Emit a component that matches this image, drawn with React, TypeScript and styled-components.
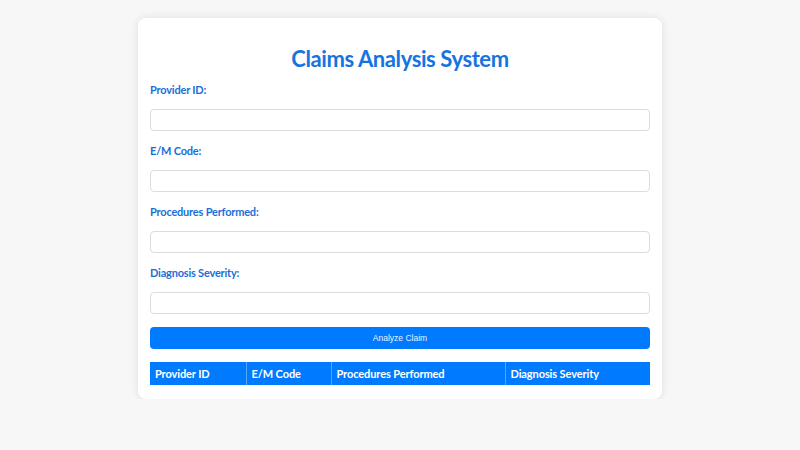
import React, {useState} from 'react';
import styled, {createGlobalStyle} from 'styled-components';

const GlobalStyle = createGlobalStyle`
  html, body {
    margin: 0;
    padding: 0;
    background: #f7f7f7;
  }
  body {
    font-family: Lato, "Open Sans", sans-serif;
  }
`;

const Page = styled.div`
  display: flex;
  justify-content: center;
  align-items: flex-start;
  padding-top: 18px;
`;

const Card = styled.div`
  width: 524px;
  box-sizing: border-box;
  padding: 27px 12px 14px;
  background: #fff;
  border-radius: 8px;
  box-shadow: 0 0 10px rgba(0, 0, 0, 0.1);
`;

const Title = styled.h1`
  margin: 0 0 11px;
  text-align: center;
  color: #1574e0;
  font-size: 22px;
  line-height: 27px;
  font-weight: 700;
  letter-spacing: -0.4px;
`;

const Field = styled.div`
  display: flex;
  flex-direction: column;
  margin-bottom: 13px;
`;

const Label = styled.label`
  color: #1a6fd6;
  font-size: 11px;
  font-weight: 700;
  line-height: 14px;
  margin-bottom: 12px;
  letter-spacing: -0.2px;
`;

const Input = styled.input`
  height: 22px;
  box-sizing: border-box;
  border: 1px solid #dcdcdc;
  border-radius: 4px;
  padding: 0 8px;
  font-size: 11px;
  outline: none;
`;

const Button = styled.button`
  display: block;
  width: 100%;
  height: 22px;
  border: none;
  border-radius: 4px;
  background: #007bff;
  color: #e8f2ff;
  font-family: "Liberation Sans", Arial, sans-serif;
  font-size: 8.5px;
  cursor: pointer;
  margin-bottom: 13px;
`;

const Table = styled.table`
  width: 100%;
  border-collapse: collapse;
`;

const Th = styled.th<{w: number}>`
  width: ${p => p.w}px;
  height: 23px;
  box-sizing: border-box;
  padding: 0 5px;
  background: #007bff;
  color: #fff;
  text-align: left;
  font-size: 11px;
  font-weight: 700;
  letter-spacing: -0.1px;
  border: 1px solid #5aa6f5;
  border-top: none;
  border-bottom: none;
  &:first-child { border-left: none; }
  &:last-child { border-right: none; }
`;

const fields = [
  {id: 'providerId', label: 'Provider ID:'},
  {id: 'emCode', label: 'E/M Code:'},
  {id: 'procedures', label: 'Procedures Performed:'},
  {id: 'severity', label: 'Diagnosis Severity:'},
];

const columns = [
  {title: 'Provider ID', w: 96},
  {title: 'E/M Code', w: 85},
  {title: 'Procedures Performed', w: 174},
  {title: 'Diagnosis Severity', w: 145},
];

export default function App() {
  const [values, setValues] = useState<Record<string, string>>({});

  return (
    <>
      <GlobalStyle/>
      <Page>
        <Card>
          <Title>Claims Analysis System</Title>
          {fields.map(f => (
            <Field key={f.id}>
              <Label htmlFor={f.id}>{f.label}</Label>
              <Input id={f.id}
                     value={values[f.id] || ''}
                     onChange={e => setValues({...values, [f.id]: e.target.value})}/>
            </Field>
          ))}
          <Button type="button">Analyze Claim</Button>
          <Table>
            <thead>
              <tr>
                {columns.map(c => <Th key={c.title} w={c.w}>{c.title}</Th>)}
              </tr>
            </thead>
            <tbody/>
          </Table>
        </Card>
      </Page>
    </>
  );
}
